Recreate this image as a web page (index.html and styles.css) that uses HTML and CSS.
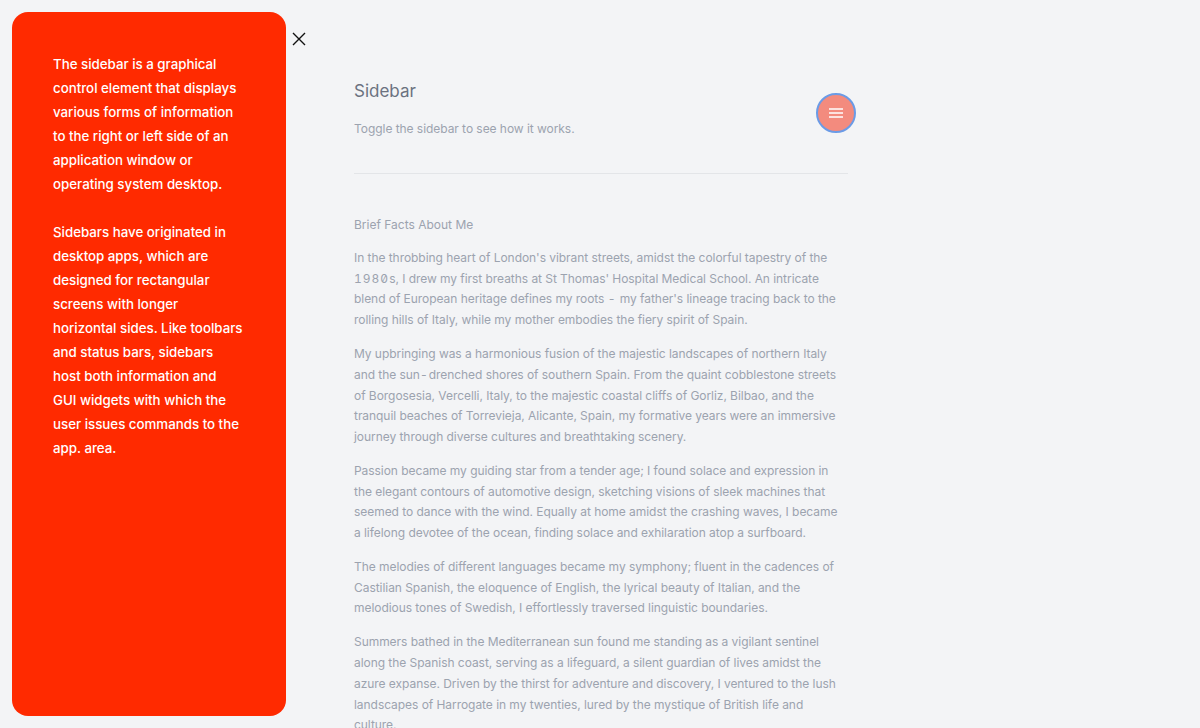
FILE: index.html
```html
<!DOCTYPE html>
<html lang="en">
<head>
  <meta charset="UTF-8">
  <meta name="viewport" content="width=device-width, initial-scale=1.0">
  <link rel="stylesheet" href="styles.css">
  <title>Sidebar</title>
</head>
<body>
  <!-- pannello laterale -->
  <aside class="sidebar">
    <p>The sidebar is a graphical control element that displays various forms of information to the right or left side of an application window or operating system desktop.</p>
    <p>Sidebars have originated in desktop apps, which are designed for rectangular screens with longer<br>horizontal sides. Like toolbars and status bars, sidebars host both information and GUI widgets with which the user issues commands to the app. area.</p>
  </aside>

  <button class="close-btn" aria-label="Close">
    <svg width="14" height="14" viewBox="0 0 14 14"><path d="M1 1L13 13M13 1L1 13" stroke="#111" stroke-width="1.4" fill="none"/></svg>
  </button>

  <!-- contenuto principale -->
  <main class="content">
    <header class="head">
      <div>
        <h1 class="title">Sidebar</h1>
        <p class="subtitle">Toggle the sidebar to see how it works.</p>
      </div>
      <button class="menu-btn" aria-label="Menu">
        <svg width="16" height="12" viewBox="0 0 16 12"><path d="M1 2H15M1 6H15M1 10H15" stroke="#fff" stroke-width="1.4" fill="none"/></svg>
      </button>
    </header>

    <hr class="divider">

    <h2 class="section">Brief Facts About Me</h2>
    <p>In the throbbing heart of London's vibrant streets, amidst the colorful tapestry of the <span class="mono">1980</span>s, I drew my first breaths at St Thomas' Hospital Medical School. An intricate blend of European heritage defines my roots <span class="mono">-</span> my father's lineage tracing back to the rolling hills of Italy, while my mother embodies the fiery spirit of Spain.</p>
    <p>My upbringing was a harmonious fusion of the majestic landscapes of northern Italy and the sun<span class="mono">-</span>drenched shores of southern Spain. From the quaint cobblestone streets of Borgosesia, Vercelli, Italy, to the majestic coastal cliffs of Gorliz, Bilbao, and the tranquil beaches of Torrevieja, Alicante, Spain, my formative years were an immersive journey through diverse cultures and breathtaking scenery.</p>
    <p>Passion became my guiding star from a tender age; I found solace and expression in the elegant contours of automotive design, sketching visions of sleek machines that seemed to dance with the wind. Equally at home amidst the crashing waves, I became a lifelong devotee of the ocean, finding solace and exhilaration atop a surfboard.</p>
    <p>The melodies of different languages became my symphony; fluent in the cadences of Castilian Spanish, the eloquence of English, the lyrical beauty of Italian, and the melodious tones of Swedish, I effortlessly traversed linguistic boundaries.</p>
    <p>Summers bathed in the Mediterranean sun found me standing as a vigilant sentinel along the Spanish coast, serving as a lifeguard, a silent guardian of lives amidst the azure expanse. Driven by the thirst for adventure and discovery, I ventured to the lush landscapes of Harrogate in my twenties, lured by the mystique of British life and culture.</p>
  </main>
</body>
</html>
```

FILE: styles.css
```css
body {
  margin: 0;
  display: flex;
  align-items: flex-start;
  background-color: #f3f4f6;
  font-family: Inter, "Noto Sans", sans-serif;
  height: 728px;
  overflow: hidden;
}

.sidebar {
  flex: none;
  box-sizing: border-box;
  width: 274px;
  height: 704px;
  margin: 12px 0 0 12px;
  padding: 40px 43px 0 41px;
  background-color: #ff2a00;
  border-radius: 16px;
  color: #fff;
  font-size: 13.3px;
  font-weight: 500;
  line-height: 24px;
}

.sidebar p {
  margin: 0 0 24px;
}

.close-btn {
  flex: none;
  margin: 32px 0 0 6px;
  padding: 0;
  width: 14px;
  height: 14px;
  border: none;
  background: none;
  display: flex;
}

.content {
  width: 502px;
  margin-left: 48px;
  padding-top: 79px;
  font-size: 12px;
  line-height: 20.7px;
  color: #9ca3af;
}

.head {
  display: flex;
  justify-content: space-between;
  align-items: center;
}

.title {
  margin: 0;
  font-size: 17px;
  line-height: 24px;
  font-weight: 400;
  color: #6b7280;
}

.menu-btn {
  width: 40px;
  height: 40px;
  margin-top: 8px;
  border-radius: 50%;
  border: 2px solid #6b9be6;
  background-color: #f38b7e;
  display: flex;
  align-items: center;
  justify-content: center;
  padding: 0;
}

.divider {
  margin: 34px 8px 0 0;
  border: none;
  border-top: 1px solid #e3e5e8;
}

.section {
  margin: 40px 0 13px;
  font-size: 12px;
  font-weight: 400;
  line-height: 21px;
}

.content p {
  margin: 0 0 13.3px;
  padding-right: 14px;
  letter-spacing: -0.05px;
}

.content .subtitle {
  margin: 15px 0 0;
  line-height: 21px;
}

.mono {
  font-feature-settings: "zero", "tnum";
  letter-spacing: 1px;
}
```
